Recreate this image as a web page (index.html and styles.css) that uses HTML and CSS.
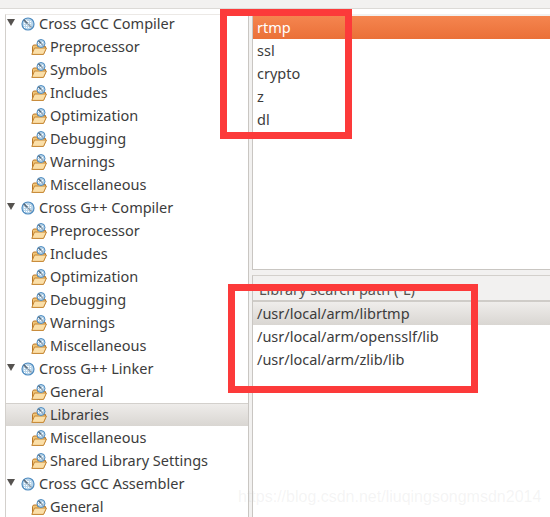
FILE: index.html
```html
<!DOCTYPE html>
<html lang="en">
<head>
<meta charset="utf-8">
<title>Libraries settings</title>
<link rel="stylesheet" href="styles.css">
</head>
<body>
<svg class="defs" width="0" height="0" aria-hidden="true">
  <symbol id="tool" viewBox="0 0 14 14">
    <circle cx="7" cy="7" r="6" fill="#b9d5ea" stroke="#4f8cc0" stroke-width="1.200"/>
    <path d="M3 4.500h8M3 6.500h8M3 8.500h8M3 10.500h8" stroke="#ffffff" stroke-width="1" stroke-dasharray="1 1"/>
    <path d="M2.800 2.800l3.700 3.700" stroke="#5a6b7b" stroke-width="1.700"/>
    <path d="M7 7l3.500 3.500" stroke="#8c99a5" stroke-width="1.400"/>
    <path d="M4.500 2.500l3 3" stroke="#ffffff" stroke-width=".8"/>
  </symbol>
  <symbol id="folder" viewBox="0 0 16 16">
    <path d="M1.500 7.500l1-1.500h4v1.500h8v3l-2 4.500h-11z" fill="#f0c679" stroke="#b9772a"/>
    <path d="M.8 15.400l2.700-6.400h12l-3 6.400z" fill="#fbdfa8" stroke="#c58632"/>
    <circle cx="10" cy="4.500" r="4" fill="#b9d5ea" stroke="#4f8cc0"/>
    <path d="M7 3.500h6M7 5.500h6" stroke="#ffffff" stroke-width="1" stroke-dasharray="1 1"/>
    <path d="M7.500 1.800l2.500 2.500" stroke="#5a6b7b" stroke-width="1.400"/>
    <path d="M10 4.300l2.300 2.300" stroke="#8c99a5" stroke-width="1.100"/>
  </symbol>
</svg>

<div class="topbar"></div>
<main class="workspace">
  <nav class="tree">
    <ul class="tree-list">
      <li class="node group"><span class="twisty"></span><svg class="ico-tool"><use href="#tool"/></svg>Cross GCC Compiler</li>
      <li class="node"><svg class="ico-folder"><use href="#folder"/></svg>Preprocessor</li>
      <li class="node"><svg class="ico-folder"><use href="#folder"/></svg>Symbols</li>
      <li class="node"><svg class="ico-folder"><use href="#folder"/></svg>Includes</li>
      <li class="node"><svg class="ico-folder"><use href="#folder"/></svg>Optimization</li>
      <li class="node"><svg class="ico-folder"><use href="#folder"/></svg>Debugging</li>
      <li class="node"><svg class="ico-folder"><use href="#folder"/></svg>Warnings</li>
      <li class="node"><svg class="ico-folder"><use href="#folder"/></svg>Miscellaneous</li>
      <li class="node group"><span class="twisty"></span><svg class="ico-tool"><use href="#tool"/></svg>Cross G++ Compiler</li>
      <li class="node"><svg class="ico-folder"><use href="#folder"/></svg>Preprocessor</li>
      <li class="node"><svg class="ico-folder"><use href="#folder"/></svg>Includes</li>
      <li class="node"><svg class="ico-folder"><use href="#folder"/></svg>Optimization</li>
      <li class="node"><svg class="ico-folder"><use href="#folder"/></svg>Debugging</li>
      <li class="node"><svg class="ico-folder"><use href="#folder"/></svg>Warnings</li>
      <li class="node"><svg class="ico-folder"><use href="#folder"/></svg>Miscellaneous</li>
      <li class="node group"><span class="twisty"></span><svg class="ico-tool"><use href="#tool"/></svg>Cross G++ Linker</li>
      <li class="node"><svg class="ico-folder"><use href="#folder"/></svg>General</li>
      <li class="node selected"><svg class="ico-folder"><use href="#folder"/></svg>Libraries</li>
      <li class="node"><svg class="ico-folder"><use href="#folder"/></svg>Miscellaneous</li>
      <li class="node"><svg class="ico-folder"><use href="#folder"/></svg>Shared Library Settings</li>
      <li class="node group"><span class="twisty"></span><svg class="ico-tool"><use href="#tool"/></svg>Cross GCC Assembler</li>
      <li class="node"><svg class="ico-folder"><use href="#folder"/></svg>General</li>
    </ul>
  </nav>
  <section class="details">
    <ul class="list upper">
      <li class="item active">rtmp</li>
      <li class="item">ssl</li>
      <li class="item">crypto</li>
      <li class="item">z</li>
      <li class="item">dl</li>
    </ul>
    <div class="lower">
      <div class="list-header">Library search path (-L)</div>
      <ul class="list">
        <li class="item focused">/usr/local/arm/librtmp</li>
        <li class="item">/usr/local/arm/opensslf/lib</li>
        <li class="item">/usr/local/arm/zlib/lib</li>
      </ul>
    </div>
  </section>
</main>
<div class="mark mark-top"></div>
<div class="mark mark-bottom"></div>
<div class="watermark">https://blog.csdn.net/liuqingsongmsdn2014</div>
</body>
</html>
```
FILE: styles.css
```css
html, body {
  margin: 0;
  height: 100%;
}
body {
  position: relative;
  overflow: hidden;
  background: #ffffff;
  color: #3c3c3c;
  font-family: "Noto Sans", "Open Sans", sans-serif;
  font-size: 14.5px;
}
ul {
  list-style: none;
  margin: 0;
  padding: 0;
}
.defs {
  position: absolute;
}
.topbar {
  height: 8px;
  background: #f2f1f0;
  border-bottom: 1px solid #dcdad7;
}
.workspace {
  display: flex;
  height: 508px;
  padding-top: 5px;
  box-sizing: border-box;
}
.tree {
  width: 242px;
  margin-left: 5px;
  border-left: 1px solid #d3d0cc;
  border-top: 1px solid #ece9e6;
  overflow: hidden;
  flex: none;
}
.tree-list {
  margin-top: -3px;
}
.node {
  display: flex;
  align-items: center;
  height: 23px;
  line-height: 23px;
  padding-left: 25px;
  white-space: nowrap;
}
.node.group {
  padding-left: 1px;
}
.node.selected {
  background: linear-gradient(#efedeb, #d9d6d2);
  box-shadow: inset 0 1px 0 #d3d0cc;
}
.twisty {
  width: 0;
  height: 0;
  margin-right: 6px;
  border-left: 4px solid transparent;
  border-right: 4px solid transparent;
  border-top: 7px solid #55524f;
  transform: translateY(-1px);
}
.ico-tool {
  width: 14px;
  height: 14px;
  margin-right: 4px;
}
.ico-folder {
  width: 16px;
  height: 16px;
  margin-right: 3px;
}
.details {
  flex: 1;
  min-width: 0;
  border-left: 1px solid #c9c6c2;
  padding-left: 3px;
  background: #f2f1f0;
  display: flex;
  flex-direction: column;
  gap: 5px;
}
.list {
  background: #ffffff;
}
.upper {
  height: 253px;
  margin-top: 2px;
  border-left: 1px solid #c9c6c2;
  border-bottom: 1px solid #c9c6c2;
}
.lower {
  flex: 1;
  display: flex;
  flex-direction: column;
  border-left: 1px solid #c9c6c2;
  border-top: 1px solid #d3d0cc;
}
.lower .list {
  flex: 1;
}
.list-header {
  height: 24px;
  line-height: 26px;
  padding-left: 6px;
  background: #f2f1f0;
  border-bottom: 2px solid #cfccc8;
  color: #55524f;
  overflow: hidden;
  white-space: nowrap;
}
.item {
  height: 23px;
  line-height: 23px;
  padding-left: 4px;
  white-space: nowrap;
}
.item.active {
  background: linear-gradient(#f5854f, #ea7038);
  color: #ffffff;
}
.item.focused {
  background: linear-gradient(#efedeb, #d9d6d2);
}
.mark {
  position: absolute;
  box-sizing: border-box;
  border: 7px solid #fc3a3a;
}
.mark-top {
  left: 220px;
  top: 9px;
  width: 132px;
  height: 130px;
}
.mark-bottom {
  left: 228px;
  top: 284px;
  width: 250px;
  height: 109px;
}
.watermark {
  position: absolute;
  left: 238px;
  top: 487px;
  font-family: "Liberation Sans", sans-serif;
  font-size: 16px;
  line-height: 20px;
  color: rgba(190, 190, 190, 0.16);
  white-space: nowrap;
}
```
